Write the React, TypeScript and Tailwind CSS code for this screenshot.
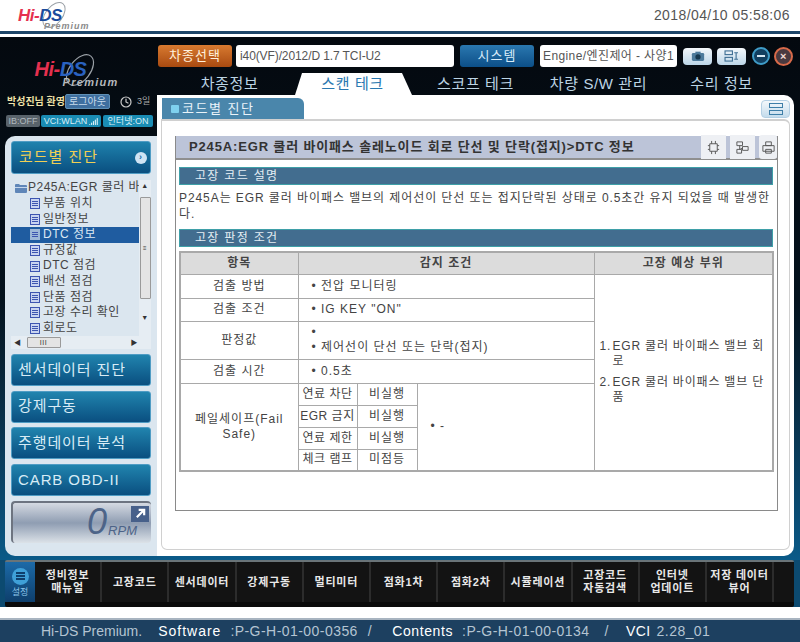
import { Clock, Signal } from "lucide-react";

const TABS = ["차종정보", "스캔 테크", "스코프 테크", "차량 S/W 관리", "수리 정보"];
const TREE = ["부품 위치", "일반정보", "DTC 정보", "규정값", "DTC 점검", "배선 점검", "단품 점검", "고장 수리 확인", "회로도"];
const SIDE = ["센서데이터 진단", "강제구동", "주행데이터 분석", "CARB OBD-II"];
const TOOLS = [
  ["정비정보", "매뉴얼"],
  ["고장코드"],
  ["센서데이터"],
  ["강제구동"],
  ["멀티미터"],
  ["점화1차"],
  ["점화2차"],
  ["시뮬레이션"],
  ["고장코드", "자동검색"],
  ["인터넷", "업데이트"],
  ["저장 데이터", "뷰어"],
];
const SAFE = [
  ["연료 차단", "비실행"],
  ["EGR 금지", "비실행"],
  ["연료 제한", "비실행"],
  ["체크 램프", "미점등"],
];

const cell = "border border-[#a9a9a9] text-center";
const detail = "border border-[#a9a9a9] pl-[13px] text-left";

function Orbit({ className }: { className: string }) {
  return (
    <svg viewBox="0 0 60 40" fill="none" className={className}>
      <ellipse cx="30" cy="20" rx="14" ry="24" transform="rotate(38 30 20)" stroke="#9aa0a6" strokeWidth="1.6" />
    </svg>
  );
}

function DocIcon({ active }: { active?: boolean }) {
  return (
    <span className={`mr-[3px] flex h-[11px] w-[10px] shrink-0 flex-col justify-center gap-px border px-px ${active ? "border-[#9db8d8] bg-[#9db8d8]" : "border-[#3d55b0] bg-[#c8d4f0]"}`}>
      <span className="h-px bg-[#3d55b0]" />
      <span className="h-px bg-[#3d55b0]" />
      <span className="h-px bg-[#3d55b0]" />
    </span>
  );
}

function TopBar() {
  return (
    <header className="flex h-[31px] items-center justify-between bg-white pl-[18px] pr-[10px]">
      <div className="relative h-[29px] w-[74px]">
        <Orbit className="absolute left-[18px] top-0 h-[28px] w-[36px]" />
        <span className="absolute left-0 top-[8px] text-[17px] font-bold italic leading-[13px] tracking-[-0.5px]">
          <span className="text-[#e5304f]">Hi-</span>
          <span className="text-[#1b4b9c]">DS</span>
        </span>
        <span className="absolute left-[26px] top-[21px] text-[9px] font-bold italic leading-[9px] tracking-[1px] text-[#8b8b8b]">Premium</span>
      </div>
      <span className="text-[14px] tracking-[0.4px] text-[#555]">2018/04/10 05:58:06</span>
    </header>
  );
}

function Sidebar() {
  return (
    <aside className="flex w-[157px] shrink-0 flex-col">
      <div className="relative mx-auto mt-[15px] h-[36px] w-[88px] translate-x-[1px]">
        <Orbit className="absolute left-[22px] top-[-1px] h-[38px] w-[44px]" />
        <span className="absolute left-[-1px] top-[9px] text-[20px] font-bold italic leading-[16px] tracking-[-0.5px]">
          <span className="text-[#e5304f]">Hi-</span>
          <span className="text-[#2a62c0]">DS</span>
        </span>
        <span className="absolute left-[27px] top-[25px] text-[11px] font-bold italic leading-[10px] tracking-[1.3px] text-[#b5b8bc]">Premium</span>
      </div>
      <div className="mt-[6px] flex h-[15px] items-center pl-[7px] text-[10px] font-bold text-[#f0e2a8]">
        <span className="w-[58px] overflow-hidden whitespace-nowrap">박성진님 환영</span>
        <span className="flex h-[15px] w-[45px] items-center justify-center rounded-[2px] border border-[#5f8fb5] bg-[#3f6f9f] text-[10px] font-normal text-[#c8dcec]">로그아웃</span>
        <Clock className="ml-[10px] h-[12px] w-[12px] text-[#c9c9c9]" strokeWidth={2.4} />
        <span className="ml-[5px] text-[9px] font-normal text-[#a8a8a8]">3일</span>
      </div>
      <div className="mt-[6px] flex h-[12px] gap-[1px] pl-[6px] text-[9px] leading-[12px] text-[#d8eef6]">
        <span className="w-[34px] rounded-[2px] bg-[#59636b] text-center text-[#b0b8be]">IB:OFF</span>
        <span className="flex w-[60px] items-center justify-center gap-[2px] rounded-[2px] bg-[#1a8cb4]">
          VCI:WLAN
          <Signal className="h-[9px] w-[9px]" strokeWidth={3} />
        </span>
        <span className="ml-[1px] w-[50px] rounded-[2px] bg-[#1a8cb4] text-center">인터넷:ON</span>
      </div>
      <div className="ml-[5px] mt-[9px] flex h-[420px] flex-col rounded-l-[10px] bg-[#dbe6ef] px-[6px] pt-[5px]">
        <div className="flex h-[33px] items-center justify-between rounded-[3px] border border-[#4f9cc4] bg-gradient-to-b from-[#1f82ad] to-[#0a4f80] pl-[7px] pr-[3px] text-[15px] tracking-[1px] text-[#f0cf55]">
          코드별 진단
          <span className="flex h-[12px] w-[12px] items-center justify-center rounded-full bg-[#cfe4f4] text-[9px] font-bold leading-none text-[#1a6ea8]">›</span>
        </div>
        <div className="mt-[6px] h-[169px] text-[12px] leading-[15.6px] tracking-[0.5px] text-[#444]">
          <div className="flex h-[156px]">
            <div className="w-[128px] overflow-hidden pl-[4px]">
              <div className="flex h-[16px] items-center whitespace-nowrap">
                <svg viewBox="0 0 12 10" className="mr-px h-[10px] w-[12px] shrink-0">
                  <path d="M0 2q0-1 1-1h3l1 1h6q1 0 1 1v6q0 1-1 1H1q-1 0-1-1z" fill="#5f86b8" />
                  <path d="M0 4h12v1H0z" fill="#c4d6ec" />
                </svg>
                P245A:EGR 쿨러 바
              </div>
              {TREE.map((t, i) => (
                <div key={t} className={`-ml-[4px] flex h-[15.6px] items-center pl-[19px] ${i === 2 ? "bg-[#1f5ca0] text-[#dce8f4]" : ""}`}>
                  <DocIcon active={i === 2} />
                  {t}
                </div>
              ))}
            </div>
            <div className="flex w-[12px] flex-col items-center bg-[#e6edf3] text-[7px] leading-[12px] text-[#333]">
              <span>▲</span>
              <span className="my-[5px] flex h-[102px] w-[11px] items-center justify-center rounded-[1px] border border-[#9a9a9a] bg-[#e4e4e4] text-[6px]">≡</span>
              <span className="mt-[8px]">▼</span>
            </div>
          </div>
          <div className="flex h-[13px] items-center bg-[#e6edf3] text-[7px] text-[#333]">
            <span className="ml-[3px]">◀</span>
            <span className="ml-[5px] flex h-[11px] w-[34px] items-center justify-center rounded-[1px] border border-[#9a9a9a] bg-[#e4e4e4] text-[7px]">III</span>
            <span className="ml-[70px]">▶</span>
          </div>
        </div>
        <div className="mt-[5px] flex flex-col gap-[4.67px]">
          {SIDE.map((s) => (
            <div key={s} className="flex h-[32px] items-center rounded-[3px] border border-[#4f9cc4] bg-gradient-to-b from-[#2184ae] to-[#0a4f80] pl-[6px] text-[15px] tracking-[0.9px] text-[#d8ecf6]">
              {s}
            </div>
          ))}
        </div>
        <div className="relative mt-[5px] flex h-[42px] items-end justify-end rounded-[4px] border-l-2 border-t-2 border-[#6d7480] bg-gradient-to-b from-[#d5dae2] via-[#8f9db2] to-[#dce2e8] pb-[5px] pr-[14px] italic text-[#4d6488]">
          <span className="text-[36px] leading-[32px]">0</span>
          <span className="ml-[1px] text-[13px] leading-[15px]">RPM</span>
          <span className="absolute right-[2px] top-[3px] flex h-[16px] w-[18px] items-center justify-center bg-[#47608a]">
            <svg viewBox="0 0 12 12" className="h-[11px] w-[11px]" fill="none" stroke="#fff" strokeWidth="2.4">
              <path d="M2 10 9 3M4 2h6v6" />
            </svg>
          </span>
        </div>
      </div>
    </aside>
  );
}

function ControlRow() {
  return (
    <div className="ml-[1px] mt-[8px] flex h-[22px] items-center text-[12px] tracking-[0.4px]">
      <button className="h-[22px] w-[74px] rounded-[3px] bg-gradient-to-b from-[#d87a30] to-[#a84a10] text-[13px] tracking-[1px] text-[#fff0dc]">차종선택</button>
      <div className="ml-[4px] flex h-[22px] w-[218px] items-center rounded-[3px] bg-white pl-[4px] tracking-[-0.1px] text-[#555]">i40(VF)/2012/D 1.7 TCI-U2</div>
      <button className="ml-[6px] h-[22px] w-[74px] rounded-[3px] bg-gradient-to-b from-[#2a78b0] to-[#0c4f88] text-[13px] tracking-[1px] text-[#d8ecf8]">시스템</button>
      <div className="ml-[6px] flex h-[22px] w-[137px] items-center whitespace-nowrap rounded-[3px] bg-white pl-[3px] text-[#555]">Engine/엔진제어 - 사양1</div>
      <button className="ml-[6px] flex h-[17px] w-[29px] items-center justify-center rounded-[4px] bg-gradient-to-b from-[#f4f8fb] to-[#bcd6e8]">
        <svg viewBox="0 0 16 12" className="h-[11px] w-[14px]">
          <rect x="1" y="2" width="14" height="9" rx="1.5" fill="#4d7b9c" />
          <rect x="5" y="0.5" width="6" height="3" fill="#4d7b9c" />
          <circle cx="8" cy="6.5" r="3" fill="#16384f" />
        </svg>
      </button>
      <button className="ml-[5px] flex h-[17px] w-[29px] items-center justify-center rounded-[4px] bg-gradient-to-b from-[#f4f8fb] to-[#bcd6e8]">
        <svg viewBox="0 0 16 13" className="h-[12px] w-[15px]" fill="none" stroke="#3f6f94" strokeWidth="1.2">
          <rect x="1" y="1" width="8" height="4" />
          <rect x="1" y="8" width="8" height="4" />
          <path d="M11 3h4M11 10h4M13 3v7" />
        </svg>
      </button>
      <span className="ml-[6px] flex h-[18px] w-[18px] items-center justify-center rounded-full border-2 border-[#3f9cc8] bg-[#123f60]">
        <span className="h-[2px] w-[8px] bg-[#d8e8f4]" />
      </span>
      <span className="ml-[4px] flex h-[19px] w-[19px] items-center justify-center rounded-full border-2 border-[#d86a4a] bg-[#4a3a40] text-[11px] font-bold leading-none text-[#f4dcd4]">×</span>
    </div>
  );
}

function TabRow() {
  return (
    <div className="ml-[11px] mt-[6px] grid h-[22px] w-[615px] grid-cols-5 text-center text-[15px] leading-[22px] tracking-[0.6px]">
      {TABS.map((t, i) => (
        <div key={t} className={i === 1 ? "bg-white text-[#2a78b0] [clip-path:polygon(11px_0,111px_0,121px_100%,4px_100%)]" : "text-[#bcd4e4]"}>
          {t}
        </div>
      ))}
    </div>
  );
}

function DtcTable() {
  return (
    <table className="ml-[3px] w-[593px] table-fixed border-collapse border-2 border-[#a9a9a9] text-[12px] leading-[15px] tracking-[1px] text-[#444]">
      <colgroup>
        <col className="w-[118px]" />
        <col className="w-[59px]" />
        <col className="w-[60px]" />
        <col className="w-[177px]" />
        <col className="w-[179px]" />
      </colgroup>
      <tbody>
        <tr className="h-[22px] bg-[#dcdcdc] font-bold">
          <td className={cell}>항목</td>
          <td className={cell} colSpan={3}>감지 조건</td>
          <td className={cell}>고장 예상 부위</td>
        </tr>
        <tr className="h-[24px]">
          <td className={cell}>검출 방법</td>
          <td className={detail} colSpan={3}>• 전압 모니터링</td>
          <td className={`${cell} break-all px-[5px] text-left tracking-[0.8px]`} rowSpan={8}>
            <div className="flex"><span className="w-[13px] shrink-0">1.</span><span>EGR 쿨러 바이패스 밸브 회로</span></div>
            <div className="mt-[6px] flex"><span className="w-[13px] shrink-0">2.</span><span>EGR 쿨러 바이패스 밸브 단품</span></div>
          </td>
        </tr>
        <tr className="h-[23px]">
          <td className={cell}>검출 조건</td>
          <td className={detail} colSpan={3}>• IG KEY "ON"</td>
        </tr>
        <tr className="h-[38px]">
          <td className={cell}>판정값</td>
          <td className={detail} colSpan={3}>•<br />• 제어선이 단선 또는 단락(접지)</td>
        </tr>
        <tr className="h-[24px]">
          <td className={cell}>검출 시간</td>
          <td className={detail} colSpan={3}>• 0.5초</td>
        </tr>
        {SAFE.map(([a, b], i) => (
          <tr key={a} className="h-[22px]">
            {i === 0 && <td className={`${cell} px-[8px]`} rowSpan={4}>페일세이프(Fail Safe)</td>}
            <td className={`${cell} whitespace-nowrap tracking-[0.5px]`}>{a}</td>
            <td className={cell}>{b}</td>
            {i === 0 && <td className={`${detail} pl-[10px]`} rowSpan={4}>• -</td>}
          </tr>
        ))}
      </tbody>
    </table>
  );
}

function Section({ title }: { title: string }) {
  return (
    <div className="ml-[3px] h-[18px] w-[594px] border border-[#3fa0a8] bg-[#426d8f] pl-[15px] text-[12px] leading-[17px] tracking-[1.3px] text-[#e4eef4]">
      {title}
    </div>
  );
}

function ToolIcon({ kind }: { kind: "chip" | "net" | "print" }) {
  return (
    <span className={`flex h-[24px] items-center justify-center bg-[#eef0f4] ${kind === "print" ? "w-[18px] rounded-[3px]" : "w-[25px]"}`}>
      <svg viewBox="0 0 16 16" className="h-[15px] w-[15px]" fill="none" stroke="#555" strokeWidth="1">
        {kind === "chip" && <path d="M4 4h8v8H4zM2 6h2M2 10h2M12 6h2M12 10h2M6 1v3M10 1v3M6 12v3M10 12v3" />}
        {kind === "net" && <path d="M2 2h6v4H2zM8 7h6v4H8zM2 10h5v4H2zM5 6v4M8 9H6" />}
        {kind === "print" && <path d="M5 2h6v4H5zM2 6h12v6H2zM5 10h6v4H5z" />}
      </svg>
    </span>
  );
}

function Content() {
  return (
    <main className="mr-[6px] flex h-[461px] flex-col rounded-r-[10px] bg-white pb-[6px]">
      <div className="flex h-[24px] items-start justify-between pl-[5px] pt-[3px]">
        <div className="flex h-[21px] w-[142px] items-center rounded-tr-[6px] bg-[#4a86ab] pl-[9px] text-[13px] tracking-[1.5px] text-[#eaf4fa]">
          <span className="mr-[3px] h-[8px] w-[8px] rounded-[1px] bg-[#7fd0ee]" />
          코드별 진단
        </div>
        <span className="mr-[4px] mt-[2px] flex h-[18px] w-[29px] flex-col items-center justify-center gap-[2px] rounded-[4px] border border-[#b4d0e4] bg-gradient-to-b from-[#f4f8fb] to-[#c4dcec]">
          <span className="h-[5px] w-[14px] border border-[#3f7fa8]" />
          <span className="h-[5px] w-[14px] border border-[#3f7fa8]" />
        </span>
      </div>
      <div className="ml-[4px] mr-[4px] flex-1 rounded-b-[6px] rounded-tr-[6px] border-x border-b border-t-2 border-[#d0d0d0] pl-[13px] pt-[15px]">
        <div className="h-[375px] w-[603px] border-x border-b border-[#8a8a8a]">
          <div className="flex h-[24px] items-center justify-between border-b-2 border-[#8f8f8f] bg-[#bcc4d8] pl-[13px] text-[13px] font-bold tracking-[0.85px] text-[#333]">
            P245A:EGR 쿨러 바이패스 솔레노이드 회로 단선 및 단락(접지)&gt;DTC 정보
            <span className="flex gap-[4px] tracking-normal">
              <ToolIcon kind="chip" />
              <ToolIcon kind="net" />
              <ToolIcon kind="print" />
            </span>
          </div>
          <div className="mt-[7px]"><Section title="고장 코드 설명" /></div>
          <p className="ml-[3px] mt-[5px] h-[39px] w-[594px] text-[12px] leading-[16px] tracking-[0.92px] text-[#444]">
            P245A는 EGR 쿨러 바이패스 밸브의 제어선이 단선 또는 접지단락된 상태로 0.5초간 유지 되었을 때 발생한다.
          </p>
          <Section title="고장 판정 조건" />
          <div className="mt-[4px]"><DtcTable /></div>
        </div>
      </div>
    </main>
  );
}

function BottomTools() {
  return (
    <div className="h-[47px] bg-[#0c4a70] pl-[5px] pr-[6px]">
      <div className="flex h-[47px] rounded-[2px] border-b-[5px] border-t-2 border-b-[#0a0a0a] border-t-[#6a7478] bg-[#131313]">
        <div className="flex w-[30px] flex-col items-center justify-center bg-gradient-to-b from-[#1c6aa8] to-[#0e3f6c]">
          <span className="flex h-[17px] w-[17px] flex-col items-center justify-center gap-px rounded-full bg-[#3fa0d8]">
            <span className="h-[2px] w-[9px] bg-[#0e3f6c]" />
            <span className="h-[2px] w-[9px] bg-[#0e3f6c]" />
            <span className="h-[2px] w-[9px] bg-[#0e3f6c]" />
          </span>
          <span className="mt-[2px] text-[9px] leading-[10px] text-[#8cc4e8]">설정</span>
        </div>
        {TOOLS.map((t) => (
          <div key={t[0] + t.length} className="flex w-[67.2px] flex-col items-center justify-center border-r-2 border-[#2c2c2c] text-[11px] font-bold leading-[13px] tracking-[0.8px] text-[#e8e8e8]">
            {t.map((l) => (
              <span key={l} className="whitespace-nowrap">{l}</span>
            ))}
          </div>
        ))}
      </div>
    </div>
  );
}

export default function App() {
  return (
    <div className="h-[642px] w-[800px] overflow-hidden bg-white font-['Liberation_Sans','Noto_Sans_CJK_KR',sans-serif]">
      <TopBar />
      <div className="h-[3px] bg-[#1d4568]" />
      <div className="h-[3px] bg-white" />
      <div className="flex h-[523px] bg-gradient-to-b from-[#04090f] via-[#04121d] to-[#0a5a88]">
        <Sidebar />
        <div className="min-w-0 flex-1">
          <ControlRow />
          <TabRow />
          <Content />
        </div>
      </div>
      <BottomTools />
      <div className="h-[11px] bg-white" />
      <footer className="flex h-[24px] items-center border-t-2 border-[#a8b4c0] bg-[#1d4060] pl-[41px] text-[14px] tracking-[0.45px] text-[#b4c4d2]">
        <span className="tracking-normal">Hi-DS Premium.</span>
        <b className="ml-[16px] font-normal tracking-[1px] text-white">Software</b>
        <span className="ml-[9px]">:P-G-H-01-00-0356</span>
        <span className="ml-[10px]">/</span>
        <b className="ml-[20px] font-normal tracking-[0.6px] text-white">Contents</b>
        <span className="ml-[9px]">:P-G-H-01-00-0134</span>
        <span className="ml-[15px]">/</span>
        <b className="ml-[17px] font-normal text-white">VCI</b>
        <span className="ml-[6px]">2.28_01</span>
      </footer>
    </div>
  );
}
